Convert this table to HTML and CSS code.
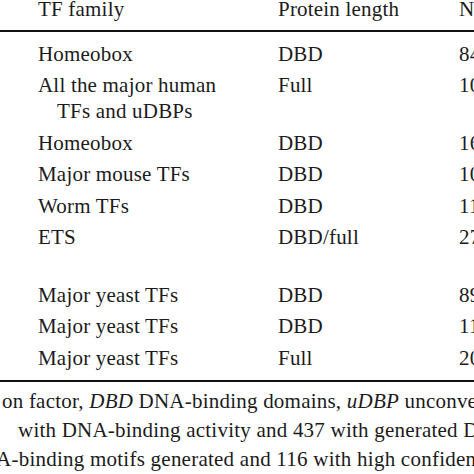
FILE: index.html
```html
<!DOCTYPE html>
<html>
<head>
<meta charset="utf-8">
<link rel="stylesheet" href="styles.css">
</head>
<body>
<div class="page">
  <div class="table">
    <div class="thead">
      <div class="row">
        <div class="cell">TF family</div>
        <div class="cell">Protein length</div>
        <div class="cell">No. of proteins</div>
        <div class="cell">Reference</div>
      </div>
    </div>
    <div class="tbody">
      <div class="row">
        <div class="cell">Homeobox</div>
        <div class="cell">DBD</div>
        <div class="cell">84</div>
        <div class="cell">Berger et al.</div>
      </div>
      <div class="row">
        <div class="cell hang">All the major human<br>TFs and uDBPs</div>
        <div class="cell">Full</div>
        <div class="cell">10</div>
        <div class="cell">Hu et al.</div>
      </div>
      <div class="row">
        <div class="cell">Homeobox</div>
        <div class="cell">DBD</div>
        <div class="cell">16</div>
        <div class="cell">Noyes et al.</div>
      </div>
      <div class="row">
        <div class="cell">Major mouse TFs</div>
        <div class="cell">DBD</div>
        <div class="cell">10</div>
        <div class="cell">Badis et al.</div>
      </div>
      <div class="row">
        <div class="cell">Worm TFs</div>
        <div class="cell">DBD</div>
        <div class="cell">11</div>
        <div class="cell">Grove et al.</div>
      </div>
      <div class="row">
        <div class="cell">ETS</div>
        <div class="cell">DBD/full</div>
        <div class="cell">27</div>
        <div class="cell">Wei et al.<br>(2010)</div>
      </div>
      <div class="row">
        <div class="cell">Major yeast TFs</div>
        <div class="cell">DBD</div>
        <div class="cell">89</div>
        <div class="cell">Badis et al.</div>
      </div>
      <div class="row">
        <div class="cell">Major yeast TFs</div>
        <div class="cell">DBD</div>
        <div class="cell">11</div>
        <div class="cell">Zhu et al.</div>
      </div>
      <div class="row">
        <div class="cell">Major yeast TFs</div>
        <div class="cell">Full</div>
        <div class="cell">20</div>
        <div class="cell">Hu et al.</div>
      </div>
    </div>
  </div>
  <div class="caption">
    <div class="line l1">on factor, <i>DBD</i> DNA-binding domains, <i>uDBP</i> unconventional DNA-binding proteins</div>
    <div class="line l2">with DNA-binding activity and 437 with generated DNA-binding motifs</div>
    <div class="line l3">A-binding motifs generated and 116 with high confidence</div>
  </div>
</div>
</body>
</html>
```

FILE: styles.css
```css
html, body {
  margin: 0;
  padding: 0;
  background: #ffffff;
  overflow: hidden;
}

body {
  width: 474px;
  height: 474px;
}

.page {
  width: 900px;
  font-family: "Liberation Serif", "Times New Roman", serif;
  font-size: 21px;
  letter-spacing: 0.2px;
  color: #1b1b1b;
  margin-top: -4px;
}

.row {
  display: grid;
  grid-template-columns: 240px 181px 200px 200px;
  padding-left: 38px;
  line-height: 26px;
}

.cell {
  white-space: nowrap;
}

.thead {
  padding-bottom: 8px;
  border-bottom: 2.5px solid #111111;
}

.tbody {
  padding-top: 6px;
  padding-bottom: 6px;
  border-bottom: 2px solid #111111;
}

.tbody .row {
  padding-top: 2.75px;
  padding-bottom: 2.75px;
}

.hang {
  padding-left: 19px;
  text-indent: -19px;
}

.caption {
  padding-top: 5.5px;
  line-height: 29px;
  letter-spacing: 0.22px;
}

.line {
  white-space: nowrap;
}

.l1 {
  padding-left: 2px;
}

.l2 {
  padding-left: 18px;
}

.l3 {
  text-indent: -4px;
  letter-spacing: 0.24px;
}
```
